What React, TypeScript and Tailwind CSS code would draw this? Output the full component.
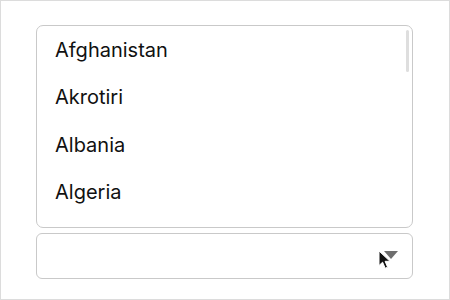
import React from 'react'

const countries = ['Afghanistan', 'Akrotiri', 'Albania', 'Algeria']

const Cursor = () => (
  <svg width="14" height="20" viewBox="0 0 14 20" className="absolute left-[-6px] top-[-3px]">
    <path
      d="M1 1 L1 15.5 L4.6 12.2 L7.2 18.2 L9.6 17.2 L7.1 11.3 L12 11.3 Z"
      fill="#111"
      stroke="#fff"
      strokeWidth="1"
      strokeLinejoin="round"
    />
  </svg>
)

export default function App() {
  return (
    <div
      className="w-[450px] h-[300px] bg-white border border-[#dcdcdc] flex flex-col items-start pl-[35px] pt-[24px] gap-[5px]"
      style={{ fontFamily: 'Inter, "Noto Sans", sans-serif' }}
    >
      <div className="relative w-[377px] h-[203px] border border-[#c9c9c9] rounded-[7px] overflow-hidden bg-white">
        <ul className="flex flex-col">
          {countries.map((c) => (
            <li key={c} className="h-[47.5px] flex items-center pl-[18px] text-[20px] text-[#111]">
              {c}
            </li>
          ))}
        </ul>
        <div className="absolute right-[3px] top-[4px] w-[3px] h-[42px] rounded-full bg-[#dedede]" />
      </div>
      <div className="relative w-[377px] h-[46px] border border-[#c9c9c9] rounded-[6px] bg-white flex items-center justify-end pr-[14px]">
        <div className="relative">
          <svg width="14" height="8" viewBox="0 0 14 8" className="block mt-[-2px]">
            <path d="M0 0 L14 0 L7 8 Z" fill="#6e6e6e" />
          </svg>
          <Cursor />
        </div>
      </div>
    </div>
  )
}
